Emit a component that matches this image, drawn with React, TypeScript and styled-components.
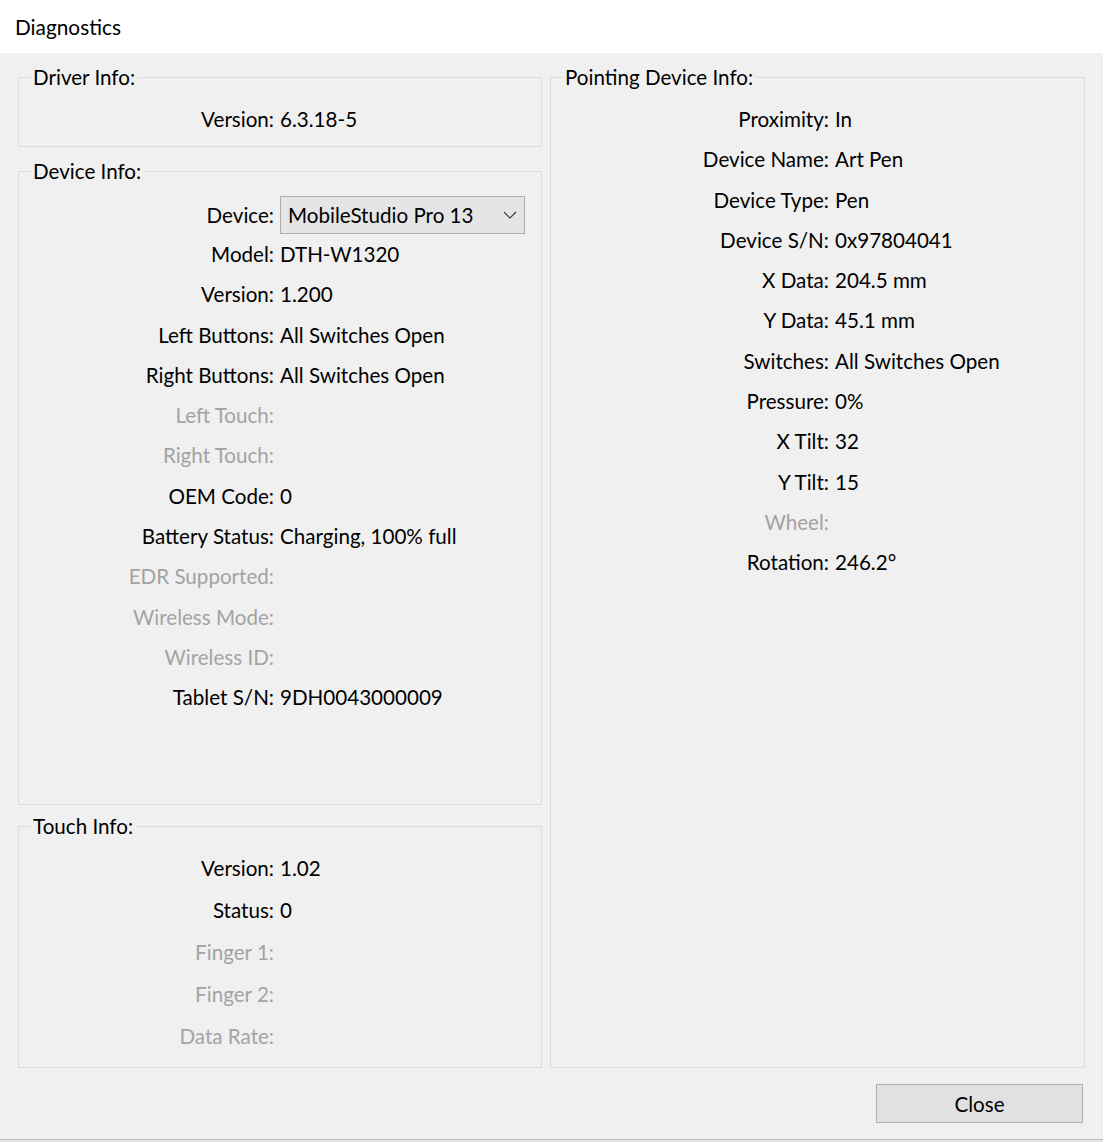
import React from 'react';
import styled, { createGlobalStyle } from 'styled-components';

const GlobalStyle = createGlobalStyle`
  html, body {
    margin: 0;
    padding: 0;
    background: #f0f0f0;
  }
  body {
    font-family: Lato, "Noto Sans", sans-serif;
    font-size: 20.6px;
    color: #000;
  }
`;

const Window = styled.div`
  width: 1103px;
  height: 1142px;
  display: flex;
  flex-direction: column;
  background: #f0f0f0;
  overflow: hidden;
`;

const TitleBar = styled.div`
  height: 53px;
  flex: none;
  background: #fff;
  display: flex;
  align-items: center;
  padding: 0 0 1px 15px;
  box-sizing: border-box;
  font-size: 20.8px;
`;

const Content = styled.div`
  display: grid;
  grid-template-columns: 524px 535px;
  column-gap: 8px;
  padding: 24px 18px 0 18px;
`;

const Column = styled.div`
  display: flex;
  flex-direction: column;
`;

const Group = styled.div<{ $height: number; $gap?: number }>`
  box-sizing: border-box;
  height: ${p => p.$height}px;
  margin-top: ${p => p.$gap || 0}px;
  border: 1px solid #dcdcdc;
  display: flex;
  flex-direction: column;
`;

const GroupTitle = styled.div`
  align-self: flex-start;
  margin: -13px 0 0 12px;
  padding: 0 3px 0 2px;
  height: 24px;
  line-height: 24px;
  background: #f0f0f0;
`;

const Rows = styled.div<{ $top: number }>`
  padding-top: ${p => p.$top}px;
  display: flex;
  flex-direction: column;
`;

const Row = styled.div<{ $label: number; $h: number }>`
  display: grid;
  grid-template-columns: ${p => p.$label}px 1fr;
  column-gap: 6px;
  align-items: center;
  height: ${p => p.$h}px;
  white-space: nowrap;
`;

const Label = styled.span<{ $off?: boolean }>`
  text-align: right;
  color: ${p => (p.$off ? '#a3a3a3' : '#000')};
`;

const Value = styled.span`
  color: #000;
`;

const Combo = styled.div`
  box-sizing: border-box;
  width: 245px;
  height: 38px;
  border: 1px solid #adadad;
  background: #e5e5e5;
  display: flex;
  align-items: center;
  justify-content: space-between;
  padding: 0 7px 0 7px;
`;

const Footer = styled.div`
  flex: 1;
  display: flex;
  justify-content: flex-end;
  align-items: flex-start;
  padding: 16px 20px 0 0;
`;

const CloseButton = styled.button`
  box-sizing: border-box;
  width: 207px;
  height: 39px;
  border: 1px solid #adadad;
  background: #e1e1e1;
  font: inherit;
  color: #000;
  padding: 0;
`;

const StatusStrip = styled.div`
  height: 2px;
  flex: none;
  border-top: 1px solid #b9b9b9;
  background: #e6e6e6;
`;

type Item = { label: string; value?: string; off?: boolean };

const driver: Item[] = [{ label: 'Version:', value: '6.3.18-5' }];

const device: Item[] = [
  { label: 'Model:', value: 'DTH-W1320' },
  { label: 'Version:', value: '1.200' },
  { label: 'Left Buttons:', value: 'All Switches Open' },
  { label: 'Right Buttons:', value: 'All Switches Open' },
  { label: 'Left Touch:', off: true },
  { label: 'Right Touch:', off: true },
  { label: 'OEM Code:', value: '0' },
  { label: 'Battery Status:', value: 'Charging, 100% full' },
  { label: 'EDR Supported:', off: true },
  { label: 'Wireless Mode:', off: true },
  { label: 'Wireless ID:', off: true },
  { label: 'Tablet S/N:', value: '9DH0043000009' },
];

const touch: Item[] = [
  { label: 'Version:', value: '1.02' },
  { label: 'Status:', value: '0' },
  { label: 'Finger 1:', off: true },
  { label: 'Finger 2:', off: true },
  { label: 'Data Rate:', off: true },
];

const pointing: Item[] = [
  { label: 'Proximity:', value: 'In' },
  { label: 'Device Name:', value: 'Art Pen' },
  { label: 'Device Type:', value: 'Pen' },
  { label: 'Device S/N:', value: '0x97804041' },
  { label: 'X Data:', value: '204.5 mm' },
  { label: 'Y Data:', value: '45.1 mm' },
  { label: 'Switches:', value: 'All Switches Open' },
  { label: 'Pressure:', value: '0%' },
  { label: 'X Tilt:', value: '32' },
  { label: 'Y Tilt:', value: '15' },
  { label: 'Wheel:', off: true },
  { label: 'Rotation:', value: '246.2°' },
];

function InfoRows({ items, label, h }: { items: Item[]; label: number; h: number }) {
  return (
    <>
      {items.map((it, i) => (
        <Row key={i} $label={label} $h={h}>
          <Label $off={it.off}>{it.label}</Label>
          <Value>{it.value}</Value>
        </Row>
      ))}
    </>
  );
}

export default function App() {
  return (
    <Window>
      <GlobalStyle />
      <TitleBar>Diagnostics</TitleBar>
      <Content>
        <Column>
          <Group $height={70}>
            <GroupTitle>Driver Info:</GroupTitle>
            <Rows $top={10}>
              <InfoRows items={driver} label={255} h={40} />
            </Rows>
          </Group>
          <Group $height={634} $gap={24}>
            <GroupTitle>Device Info:</GroupTitle>
            <Rows $top={12}>
              <Row $label={255} $h={39}>
                <Label>Device:</Label>
                <Combo>
                  <span>MobileStudio Pro 13</span>
                  <svg width="14" height="8" viewBox="0 0 14 8">
                    <polyline points="1,1 7,7 13,1" fill="none" stroke="#404040" strokeWidth="1.2" />
                  </svg>
                </Combo>
              </Row>
              <InfoRows items={device} label={255} h={40.27} />
            </Rows>
          </Group>
          <Group $height={242} $gap={21}>
            <GroupTitle>Touch Info:</GroupTitle>
            <Rows $top={9}>
              <InfoRows items={touch} label={255} h={42} />
            </Rows>
          </Group>
        </Column>
        <Column>
          <Group $height={991}>
            <GroupTitle>Pointing Device Info:</GroupTitle>
            <Rows $top={10}>
              <InfoRows items={pointing} label={278} h={40.27} />
            </Rows>
          </Group>
        </Column>
      </Content>
      <Footer>
        <CloseButton>Close</CloseButton>
      </Footer>
      <StatusStrip />
    </Window>
  );
}
